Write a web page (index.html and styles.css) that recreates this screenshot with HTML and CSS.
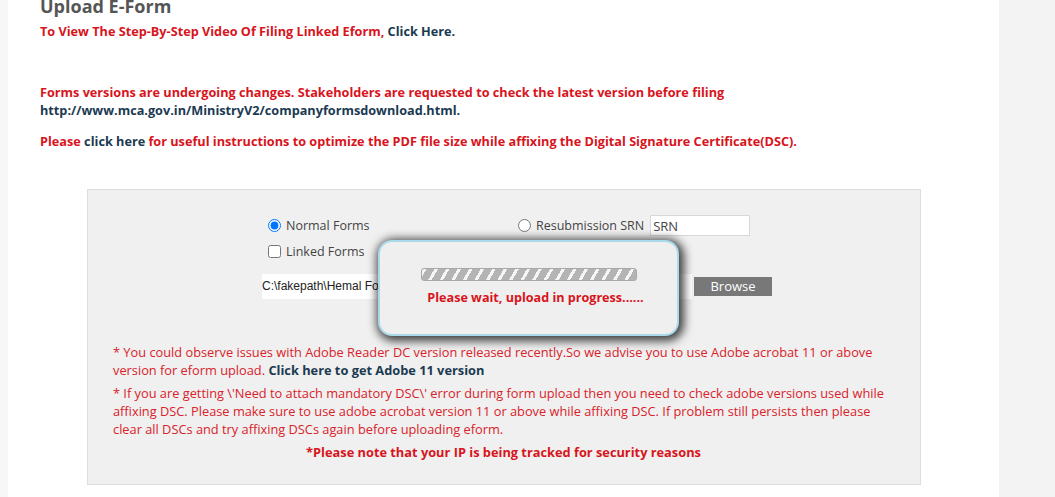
FILE: index.html
```html
<!DOCTYPE html>
<html lang="en">
<head>
<meta charset="utf-8">
<title>Upload E-Form</title>
<link rel="stylesheet" href="styles.css">
</head>
<body>
<div class="page">
  <div class="edge-left"></div>
  <main class="content">
    <h1 class="title">Upload E-Form</h1>
    <p class="red bold line1">To View The Step-By-Step Video Of Filing Linked Eform, <a class="dark" href="#">Click Here.</a></p>
    <p class="red bold notice">Forms versions are undergoing changes. Stakeholders are requested to check the latest version before filing<br><a class="dark" href="#">http://www.mca.gov.in/MinistryV2/companyformsdownload.html.</a></p>
    <p class="red bold notice2">Please <a class="dark" href="#">click here</a> for useful instructions to optimize the PDF file size while affixing the Digital Signature Certificate(DSC).</p>

    <section class="panel">
      <div class="form-grid">
        <label class="opt"><input type="radio" name="ftype" checked> Normal Forms</label>
        <label class="opt opt-right"><input type="radio" name="ftype"> Resubmission SRN <input class="srn" type="text" value="SRN"></label>
        <label class="opt"><input type="checkbox"> Linked Forms</label>
        <span></span>
        <div class="file-row">
          <span class="filepath">C:\fakepath\Hemal Form.pdf</span>
          <button class="browse" type="button">Browse</button>
        </div>
      </div>
      <div class="notes">
        <p>* You could observe issues with Adobe Reader DC version released recently.So we advise you to use Adobe acrobat 11 or above version for eform upload. <a class="dark bold" href="#">Click here to get Adobe 11 version</a></p>
        <p>* If you are getting \'Need to attach mandatory DSC\' error during form upload then you need to check adobe versions used while affixing DSC. Please make sure to use adobe acrobat version 11 or above while affixing DSC. If problem still persists then please clear all DSCs and try affixing DSCs again before uploading eform.</p>
        <p class="ip bold">*Please note that your IP is being tracked for security reasons</p>
      </div>

      <div class="modal">
        <div class="progress"></div>
        <p class="wait bold">Please wait, upload in progress......</p>
      </div>
    </section>
  </main>
  <div class="edge-right"></div>
</div>
</body>
</html>
```

FILE: styles.css
```css
* { box-sizing: border-box; }
html, body { margin: 0; padding: 0; }
body {
  font-family: "Open Sans", "Noto Sans", sans-serif;
  background: #fff;
  overflow: hidden;
  height: 497px;
}
.page {
  display: flex;
  height: 497px;
}
.edge-left { width: 8px; background: #f7f7f7; flex: none; }
.edge-right { width: 56px; background: #f3f3f3; flex: none; }
.content {
  flex: 1;
  background: #fff;
  padding: 0 0 0 32px;
  position: relative;
}
.title {
  margin: -5px 0 0;
  font-size: 18px;
  line-height: 22px;
  font-weight: 700;
  color: #555;
}
p { margin: 0; }
.red { color: #d8141c; }
.bold { font-weight: 700; }
.dark { color: #1b3a52; text-decoration: none; }
.line1, .notice, .notice2 {
  font-size: 12.7px;
  line-height: 18px;
}
.line1 { margin-top: 5px; }
.notice { margin-top: 43px; }
.notice2 { margin-top: 13px; }
.panel {
  position: relative;
  margin: 39px 0 0 47px;
  width: 834px;
  height: 296px;
  background: #f0f0f0;
  border: 1px solid #dedede;
  padding: 25px 0 0 0;
}
.form-grid {
  display: grid;
  grid-template-columns: 251px auto;
  margin-left: 179px;
  row-gap: 5px;
  font-size: 12.5px;
  color: #444;
}
.opt {
  display: flex;
  align-items: center;
  height: 21px;
}
.opt input[type=radio], .opt input[type=checkbox] {
  margin: 0 5px 0 1px;
  width: 13px;
  height: 13px;
}
.opt-right input[type=radio] { margin-left: 0; }
.srn {
  margin-left: 6px;
  width: 100px;
  height: 21px;
  border: 1px solid #d8d8d8;
  background: #fff;
  font: 13px "Open Sans", sans-serif;
  color: #444;
  padding: 0 2px;
}
.file-row {
  grid-column: 1 / 3;
  display: flex;
  align-items: center;
  margin-top: 7px;
  margin-left: -5px;
}
.filepath {
  width: 430px;
  height: 25px;
  background: #fff;
  font: 12px/25px "Liberation Sans", Arial, sans-serif;
  color: #222;
}
.browse {
  margin-left: 2px;
  width: 78px;
  height: 19px;
  background: #787878;
  color: #fff;
  border: 0;
  font: 13px/19px "Open Sans", sans-serif;
  padding: 0;
}
.notes {
  margin: 44px 0 0 25px;
  width: 775px;
  font-size: 12.8px;
  line-height: 18px;
  color: #d9222a;
}
.notes p + p { margin-top: 5px; }
.notes .ip {
  text-align: center;
  margin-top: 5px;
  padding-left: 6px;
  color: #d8141c;
}
.modal {
  position: absolute;
  left: 290px;
  top: 50px;
  width: 301px;
  height: 96px;
  background: #efefef;
  border: 2px solid #a9d9ea;
  border-radius: 14px;
  box-shadow: 2px 2px 10px 3px rgba(0,0,0,0.75);
  display: flex;
  flex-direction: column;
  align-items: center;
  padding-top: 26px;
}
.progress {
  width: 216px;
  height: 13px;
  border-radius: 3px;
  border: 1px solid #a8a8a8;
  background: repeating-linear-gradient(-60deg, #b4b4b4 0 7px, #f6f6f6 7px 10px);
}
.wait {
  margin: 8px 0 0 14px;
  font-size: 12.6px;
  color: #d8141c;
}
```
